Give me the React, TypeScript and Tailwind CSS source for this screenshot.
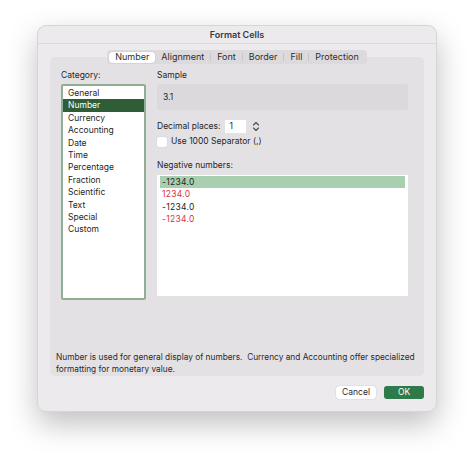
import { useState } from 'react';

const CATEGORIES = [
	'General',
	'Number',
	'Currency',
	'Accounting',
	'Date',
	'Time',
	'Percentage',
	'Fraction',
	'Scientific',
	'Text',
	'Special',
	'Custom',
];

const TABS = ['Number', 'Alignment', 'Font', 'Border', 'Fill', 'Protection'];

const NEGATIVES = [
	{ label: '-1234.0', red: false },
	{ label: '1234.0', red: true },
	{ label: '-1234.0', red: false },
	{ label: '-1234.0', red: true },
];

function Stepper() {
	return (
		<svg width="8" height="13" viewBox="0 0 8 13" className="ml-[6px]">
			<path d="M1.5 5 L4 2.5 L6.5 5" fill="none" stroke="#4a4a4a" strokeWidth="1.1" strokeLinecap="round" strokeLinejoin="round" />
			<path d="M1.5 8 L4 10.5 L6.5 8" fill="none" stroke="#4a4a4a" strokeWidth="1.1" strokeLinecap="round" strokeLinejoin="round" />
		</svg>
	);
}

export default function App() {
	const [category, setCategory] = useState('Number');
	const [negative, setNegative] = useState(0);
	const [useSeparator, setUseSeparator] = useState(false);

	return (
		<div
			className="w-[474px] h-[460px] bg-white pt-[25px] pl-[37px] text-[#262626]"
			style={{ fontFamily: 'Inter, "Noto Sans", sans-serif' }}
		>
			<div className="w-[400px] h-[387px] rounded-[9px] bg-[#eceaed] border border-[#d6d4d7] shadow-[0_12px_30px_rgba(0,0,0,0.25)] flex flex-col">
				<div className="h-[18px] border-b border-[#dcdadd] flex items-center justify-center text-[9px] font-semibold text-[#3a3a3a]">
					Format Cells
				</div>

				<div className="relative mt-[13px] mx-[12px] h-[319px] rounded-[5px] bg-[#e4e1e5]">
					<div className="absolute -top-[7px] left-0 right-0 flex justify-center">
						<div className="flex items-center h-[14px] rounded-[4px] bg-[#dddade] px-[2px] text-[9px] text-[#2e2e2e]">
							{TABS.map((tab, i) => (
								<div key={tab} className="flex items-center">
									{i > 1 && <div className="w-px h-[8px] bg-[#c9c6ca]" />}
									<div
										className={
											tab === 'Number'
												? 'h-[11px] px-[6px] flex items-center rounded-[3px] bg-white shadow-[0_0_1px_rgba(0,0,0,0.3)]'
												: 'h-[11px] px-[6px] flex items-center'
										}
									>
										{tab}
									</div>
								</div>
							))}
						</div>
					</div>

					<div className="flex pt-[12px] pl-[11px] text-[8.5px]">
						<div className="w-[85px] flex flex-col">
							<div className="h-[13px] leading-[13px] mb-[2px]">Category:</div>
							<div className="h-[216px] rounded-[2px] border-2 border-[#8fae93] bg-white pt-[1px]">
								{CATEGORIES.map((c) => (
									<div
										key={c}
										onClick={() => setCategory(c)}
										className={
											c === category
												? 'h-[12.4px] leading-[12.4px] pl-[5px] bg-[#2e5d36] text-white'
												: 'h-[12.4px] leading-[12.4px] pl-[5px]'
										}
									>
										{c}
									</div>
								))}
							</div>
						</div>

						<div className="ml-[11px] w-[251px] flex flex-col">
							<div className="h-[13px] leading-[13px] mb-[2px]">Sample</div>
							<div className="h-[26px] rounded-[3px] bg-[#dcd9dd] flex items-center pl-[6px]">3.1</div>

							<div className="mt-[10px] flex items-center h-[13px]">
								<span>Decimal places:</span>
								<div className="ml-[5px] w-[21px] h-[13px] bg-white flex items-center pl-[4px]">1</div>
								<Stepper />
							</div>

							<div className="mt-[2px] flex items-center h-[13px]">
								<div
									onClick={() => setUseSeparator(!useSeparator)}
									className="w-[10px] h-[10px] rounded-[2px] bg-white shadow-[0_0_1px_rgba(0,0,0,0.25)]"
								/>
								<span className="ml-[4px]">Use 1000 Separator (,)</span>
							</div>

							<div className="mt-[11px] h-[13px] leading-[13px]">Negative numbers:</div>
							<div className="mt-[3px] h-[121px] bg-white px-[3px] pt-[1px]">
								{NEGATIVES.map((n, i) => (
									<div
										key={i}
										onClick={() => setNegative(i)}
										className={`h-[12.4px] leading-[12.4px] pl-[2px] tracking-[0.3px] ${
											i === negative ? 'bg-[#a9cfb1] ' : ''
										}${n.red ? 'text-[#d8353c]' : 'text-[#1f1f1f]'}`}
									>
										{n.label}
									</div>
								))}
							</div>
						</div>
					</div>

					<div className="mt-[51px] pl-[6px] pr-[2px] text-[8.3px] leading-[12px] text-[#2a2a2a]">
						Number is used for general display of numbers.&nbsp; Currency and Accounting offer specialized
						formatting for monetary value.
					</div>
				</div>

				<div className="flex justify-end gap-[8px] mt-[10px] mr-[12px] text-[8.5px]">
					<button className="w-[40px] h-[13px] rounded-[3px] bg-white shadow-[0_0_1px_rgba(0,0,0,0.35)] text-[#2a2a2a]">
						Cancel
					</button>
					<button className="w-[40px] h-[13px] rounded-[3px] bg-[#2f7a4b] text-white">OK</button>
				</div>
			</div>
		</div>
	);
}
